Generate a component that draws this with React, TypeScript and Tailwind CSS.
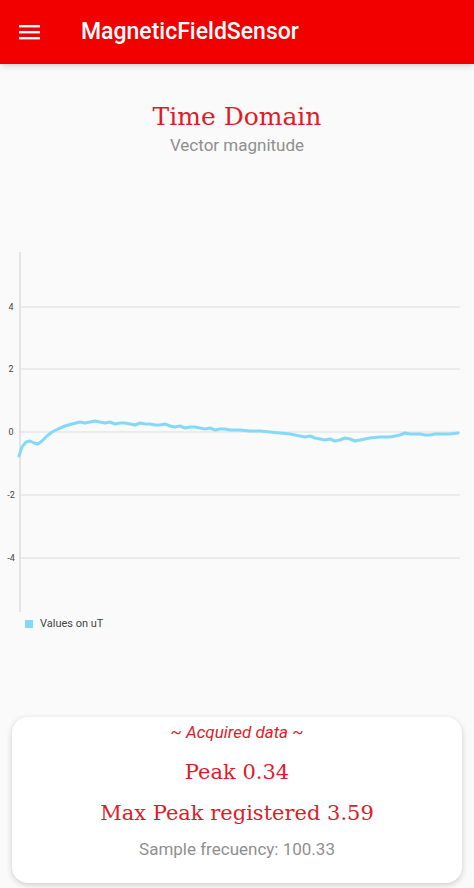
import React from 'react';

// samples of the vector magnitude trace, in page coords (x, y)
const trace: [number, number][] = [
  [19, 456], [22, 447], [26, 442], [30, 441], [34, 443], [38, 444], [42, 441], [47, 436],
  [52, 432], [58, 429], [65, 426], [72, 424], [80, 422], [85, 423], [90, 422], [95, 421],
  [100, 422], [105, 423], [110, 422], [115, 424], [120, 423], [125, 423], [130, 424],
  [135, 425], [140, 423], [145, 424], [150, 424], [155, 425], [160, 425], [165, 424],
  [170, 426], [175, 427], [180, 426], [185, 428], [190, 427], [195, 427], [200, 428],
  [205, 429], [210, 428], [215, 430], [220, 429], [225, 429], [230, 430], [240, 430],
  [250, 431], [260, 431], [270, 432], [280, 433], [290, 434], [300, 436], [305, 437],
  [310, 436], [315, 438], [320, 439], [325, 440], [330, 439], [335, 441], [340, 440],
  [345, 438], [350, 439], [355, 441], [360, 440], [365, 439], [370, 438], [380, 437],
  [390, 437], [400, 435], [405, 433], [410, 434], [420, 434], [425, 435], [430, 435],
  [435, 434], [440, 434], [450, 434], [458, 433],
];

const TOP = 245;
const grid = [
  { y: 307, label: '4' },
  { y: 369, label: '2' },
  { y: 432, label: '0' },
  { y: 495, label: '-2' },
  { y: 558, label: '-4' },
];

const serif = { fontFamily: '"DejaVu Serif", serif' };

const Chart: React.FC = () => {
  const d = trace.map(([x, y], i) => `${i === 0 ? 'M' : 'L'}${x} ${y - TOP}`).join(' ');
  return (
    <svg width="474" height="372" viewBox="0 0 474 372" className="block">
      {grid.map(g => (
        <g key={g.label}>
          <line x1="20" x2="460" y1={g.y - TOP} y2={g.y - TOP} stroke="#e6e6e6" strokeWidth="1.5" />
          <text x="11" y={g.y - TOP + 3} fontSize="9" fill="#444" textAnchor="middle" fontFamily="Roboto, sans-serif">
            {g.label}
          </text>
        </g>
      ))}
      <line x1="20" x2="20" y1="7" y2="367" stroke="#dcdcdc" strokeWidth="1.5" />
      <path d={d} fill="none" stroke="#84daf6" strokeWidth="3" strokeLinejoin="round" strokeLinecap="round" />
    </svg>
  );
};

const App: React.FC = () => {
  return (
    <div className="w-[474px] h-[888px] bg-[#fafafa] flex flex-col overflow-hidden" style={{ fontFamily: 'Roboto, sans-serif' }}>
      <header className="h-16 bg-[#f20000] flex items-center shadow-md shrink-0">
        <svg width="22" height="16" viewBox="0 0 22 16" className="ml-[19px]">
          <rect x="0" y="1" width="21" height="2.4" fill="#fff" />
          <rect x="0" y="7" width="21" height="2.4" fill="#fff" />
          <rect x="0" y="13" width="21" height="2.4" fill="#fff" />
        </svg>
        <h1 className="ml-[40px] text-white text-[23px] font-medium">MagneticFieldSensor</h1>
      </header>

      <div className="pt-[37px] flex flex-col items-center">
        <h2 className="text-[25px] leading-[32px] text-[#e01a2b]" style={serif}>
          Time Domain
        </h2>
        <p className="mt-[2px] text-[17px] leading-[20px] text-[#8f8f8f]">Vector magnitude</p>
      </div>

      <div className="mt-[90px]">
        <Chart />
        <div className="flex items-center h-[14px] pl-[25px] gap-[7px]">
          <span className="w-[8px] h-[8px] bg-[#84daf6]" />
          <span className="text-[11px] text-[#444]">Values on uT</span>
        </div>
      </div>

      <div className="mt-[86px] mx-[12px] h-[166px] bg-white rounded-2xl shadow-[0_2px_6px_rgba(0,0,0,0.18)] flex flex-col items-center pt-[5px]">
        <p className="text-[17px] leading-[20px] italic text-[#e01a2b]">~ Acquired data ~</p>
        <p className="mt-[16px] text-[21px] leading-[28px] text-[#e01a2b]" style={serif}>
          Peak 0.34
        </p>
        <p className="mt-[13px] text-[21px] leading-[28px] text-[#e01a2b]" style={serif}>
          Max Peak registered 3.59
        </p>
        <p className="mt-[12px] text-[17px] leading-[20px] text-[#8f8f8f]">Sample frecuency: 100.33</p>
      </div>
    </div>
  );
};

export default App;
